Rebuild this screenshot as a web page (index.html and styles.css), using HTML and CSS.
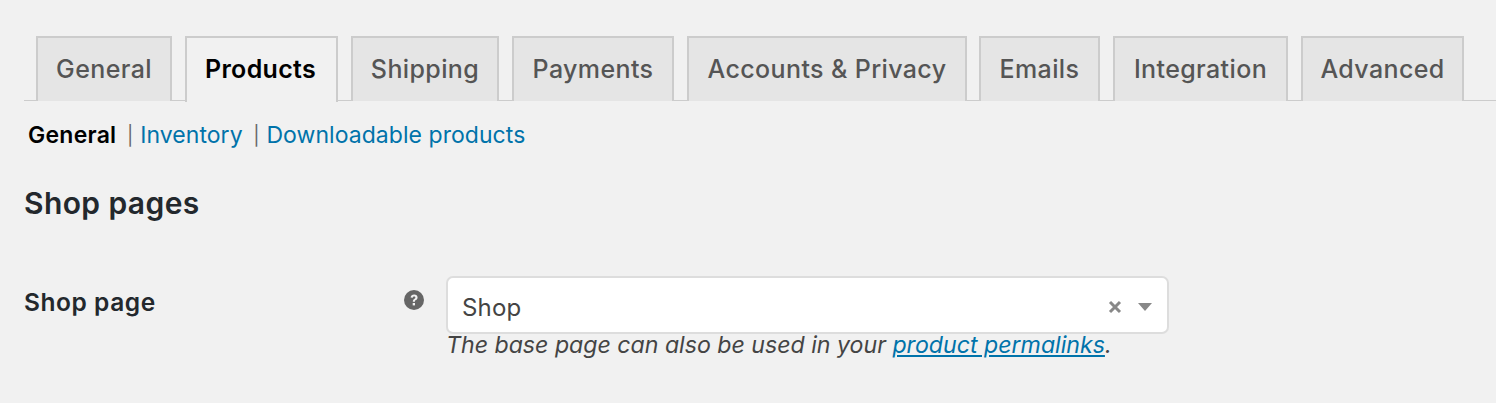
FILE: index.html
```html
<!DOCTYPE html>
<html lang="en">
<head>
<meta charset="utf-8">
<title>Products settings</title>
<link rel="stylesheet" href="styles.css">
</head>
<body>
<main class="wrap">
  <nav class="tabs">
    <a class="tab t1">General</a>
    <a class="tab active t2">Products</a>
    <a class="tab t3">Shipping</a>
    <a class="tab t4">Payments</a>
    <a class="tab t5">Accounts &amp; Privacy</a>
    <a class="tab t6">Emails</a>
    <a class="tab t7">Integration</a>
    <a class="tab t8">Advanced</a>
  </nav>
  <ul class="subnav">
    <li class="current">General</li>
    <li class="sep">|</li>
    <li class="link">Inventory</li>
    <li class="sep">|</li>
    <li class="link">Downloadable products</li>
  </ul>
  <h2 class="section">Shop pages</h2>
  <div class="row">
    <div class="label">Shop page</div>
    <svg class="help" viewBox="0 0 20 20" aria-hidden="true">
      <circle cx="10" cy="10" r="10" fill="#666"/>
      <path d="M6.6 7.6C6.8 5.6 8.2 4.5 10.2 4.5c2 0 3.4 1.2 3.4 2.9 0 1.3-.7 2-1.7 2.7-.8.5-1 .9-1 1.7H8.8c0-1.4.4-2.1 1.4-2.8.8-.5 1.2-.9 1.2-1.5 0-.7-.5-1.1-1.2-1.1-.8 0-1.3.5-1.4 1.3z" fill="#f1f1f1"/>
      <rect x="8.7" y="13" width="2.3" height="2.4" fill="#f1f1f1"/>
    </svg>
    <div class="field">
      <div class="select">
        <span class="value">Shop</span>
        <svg class="clear" viewBox="0 0 14 14" aria-hidden="true"><path d="M2 2l10 10M12 2L2 12" stroke="#888" stroke-width="3"/></svg>
        <span class="caret"></span>
      </div>
      <p class="desc">The base page can also be used in your <a class="desc-link">product permalinks</a>.</p>
    </div>
  </div>
</main>
</body>
</html>
```
FILE: styles.css
```css
* { box-sizing: border-box; }
html, body { margin: 0; height: 403px; overflow: hidden; }
body {
  background: #f1f1f1;
  color: #23282d;
  font-family: Inter, "Liberation Sans", sans-serif;
}
.wrap { padding: 36px 0 0 24px; }
.tabs {
  display: flex;
  gap: 13px;
  height: 65px;
  padding-left: 12px;
  border-bottom: 1.5px solid #ccc;
}
.tab {
  height: 65px;
  display: flex;
  align-items: center;
  justify-content: center;
  padding-bottom: 1px;
  background: #e5e5e5;
  border: 2px solid #ccc;
  border-bottom: 0;
  color: #555;
  font-size: 25px;
  font-weight: 550;
  letter-spacing: .38px;
}
.tab.active { background: #f1f1f1; color: #000; height: 66px; font-weight: 600; letter-spacing: .3px; padding: 0 2px 2px 0; }
.t1 { width: 136px; }
.t2 { width: 153px; }
.t3 { width: 148px; }
.t4 { width: 162px; }
.t5 { width: 280px; }
.t6 { width: 121px; margin-left: -1px; }
.t7 { width: 175px; }
.t8 { width: 163px; }
.subnav {
  list-style: none;
  margin: 0;
  padding: 20px 0 0 4px;
  display: flex;
  font-size: 23px;
  line-height: 28px;
  color: #666;
}
.current { color: #000; font-weight: 600; letter-spacing: .25px; }
.sep { margin: 0 7px 0 10.500px; font-size: 19px; padding-top: 1px; }
.link { color: #0073aa; letter-spacing: .05px; }
.section {
  margin: 0;
  padding-top: 35px;
  font-size: 30px;
  line-height: 36px;
  font-weight: 600;
  letter-spacing: .4px;
}
.row { display: flex; margin-top: 55px; }
.label {
  width: 380px;
  font-size: 24.500px;
  line-height: 28px;
  font-weight: 600;
  letter-spacing: .55px;
  padding-top: 12px;
}
.help { width: 20px; height: 20px; margin-top: 14px; }
.field { margin-left: 23px; width: 722px; }
.select {
  height: 58px;
  margin-left: -1px;
  background: #fff;
  border: 2px solid #ddd;
  border-radius: 7px;
  display: flex;
  align-items: center;
  padding: 0 15px 0 14px;
}
.value { flex: 1; font-size: 24px; letter-spacing: .2px; color: #444; padding-top: 5px; }
.clear { width: 14px; height: 14px; margin: 4px 16px 0 0; }
.caret {
  width: 0;
  height: 0;
  margin-top: 3px;
  border-left: 7px solid transparent;
  border-right: 7px solid transparent;
  border-top: 8px solid #888;
}
.desc {
  margin: 0 0 0 -1px;
  font-size: 23.150px;
  line-height: 22px;
  font-style: italic;
  color: #444;
}
.desc-link { color: #0073aa; text-decoration: underline; }
```
